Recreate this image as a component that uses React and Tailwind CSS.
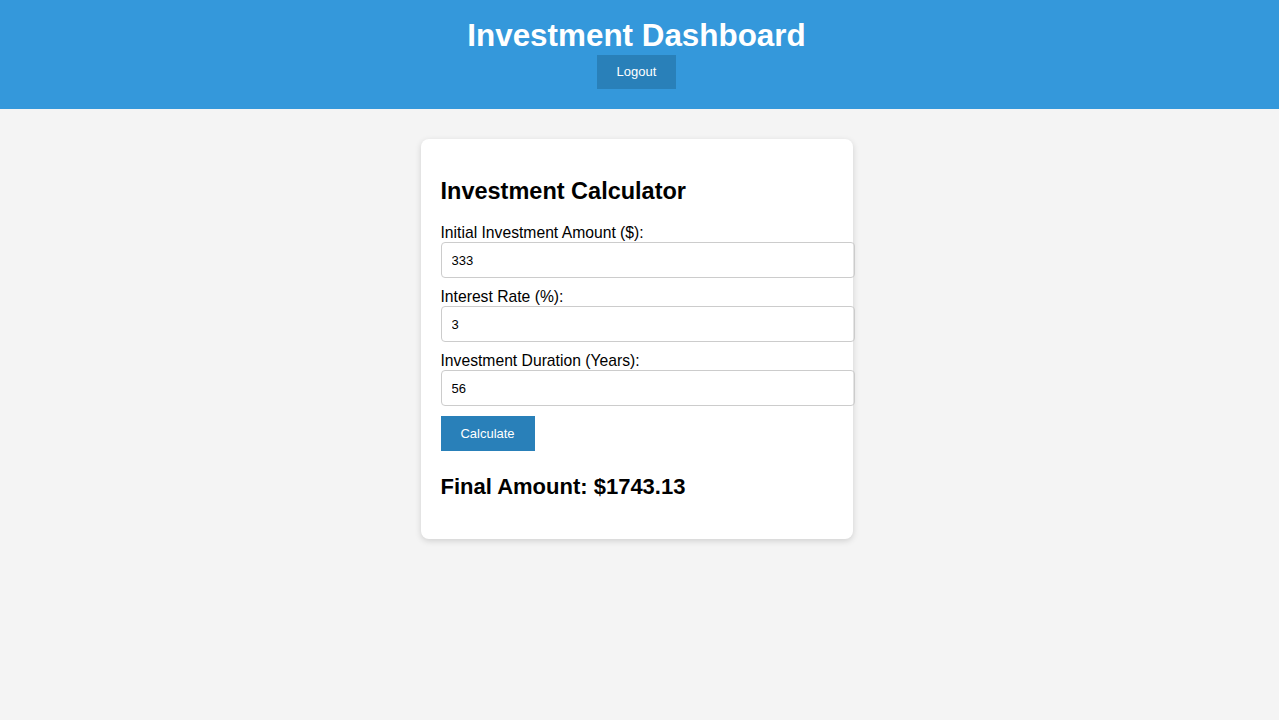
import { useState } from 'react';

export default function App() {
  const [amount, setAmount] = useState('333');
  const [rate, setRate] = useState('3');
  const [years, setYears] = useState('56');
  const [result] = useState('1743.13');

  const fields = [
    { label: 'Initial Investment Amount ($):', value: amount, set: setAmount },
    { label: 'Interest Rate (%):', value: rate, set: setRate },
    { label: 'Investment Duration (Years):', value: years, set: setYears },
  ];

  return (
    <div className="min-h-[720px] bg-[#f4f4f4] font-['Liberation_Sans',Arial,sans-serif] text-black">
      {/* Header */}
      <header className="bg-[#3498db] pt-[17px] pb-[20px] text-white">
        <div className="flex flex-col items-center pr-[6px]">
          <h1 className="text-[31.4px] font-bold leading-[37px]">Investment Dashboard</h1>
          <button className="mt-[1px] h-[34px] w-[79px] bg-[#2980b9] text-[13px] text-white">Logout</button>
        </div>
      </header>

      {/* Calculator card */}
      <main className="pt-[30px] pr-[6px]">
        <div className="mx-auto w-[432px] rounded-[8px] bg-white px-[20px] pt-[20px] pb-[20px] shadow-[0_2px_6px_rgba(0,0,0,0.15)]">
          <h2 className="mt-[18px] mb-[19px] text-[23.5px] font-bold leading-[28px]">Investment Calculator</h2>
          {fields.map(f => (
            <div key={f.label}>
              <label className="block text-[15.7px] leading-[18px]">{f.label}</label>
              <input
                value={f.value}
                onChange={e => f.set(e.target.value)}
                className="mb-[10px] box-content block h-[34px] w-full rounded-[4px] border border-[#cccccc] px-[10px] text-[13px] outline-none"
              />
            </div>
          ))}
          <button className="h-[35px] w-[94px] bg-[#2980b9] text-[13px] text-white">Calculate</button>
          <h3 className="mt-[23px] mb-[20px] text-[22px] font-bold leading-[25px]">Final Amount: ${result}</h3>
        </div>
      </main>
    </div>
  );
}
